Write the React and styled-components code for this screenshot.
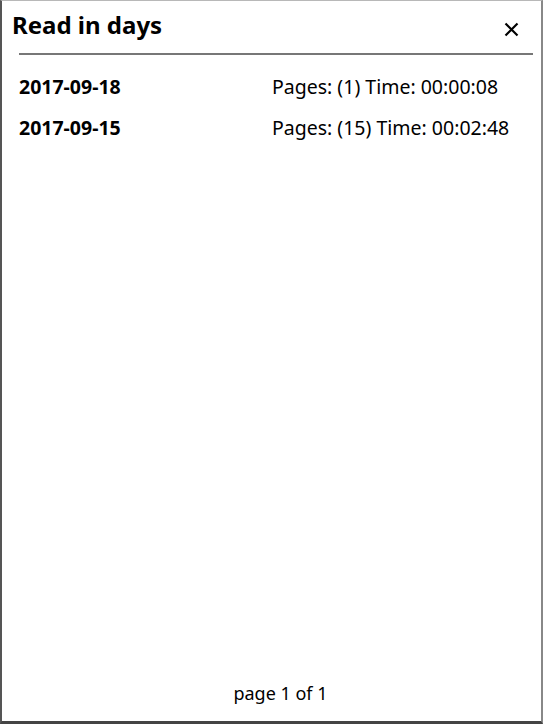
import React from "react";
import styled, { createGlobalStyle } from "styled-components";

const Global = createGlobalStyle`
  html, body {
    margin: 0;
    padding: 0;
    background: #fff;
  }
  body {
    font-family: "Noto Sans", "DejaVu Sans", sans-serif;
    color: #000;
  }
`;

const Frame = styled.div`
  box-sizing: border-box;
  width: 543px;
  height: 724px;
  display: flex;
  flex-direction: column;
  border-top: 1px solid #b8b8b8;
  border-left: 2px solid #555;
  border-right: 2px solid #888;
  border-bottom: 3px solid #444;
  background: #fff;
`;

const Header = styled.div`
  display: flex;
  align-items: center;
  justify-content: space-between;
  height: 50px;
  padding: 0 21px 0 10px;
`;

const Title = styled.h1`
  margin: 0;
  font-size: 24px;
  font-weight: 700;
  line-height: 1;
  margin-top: -2px;
`;

const Close = styled.button`
  border: 0;
  background: none;
  padding: 0;
  width: 18px;
  height: 20px;
  display: flex;
  align-items: center;
  justify-content: center;
  margin-top: 6px;
  cursor: pointer;
`;

const Rule = styled.hr`
  margin: 2px 8px 0 17px;
  border: 0;
  height: 2px;
  background: #777;
`;

const List = styled.div`
  display: flex;
  flex-direction: column;
  padding: 11px 0 0 17px;
`;

const Row = styled.div`
  display: grid;
  grid-template-columns: 253px 1fr;
  height: 41px;
  align-items: center;
  font-size: 19.5px;
`;

const Day = styled.span`
  font-weight: 700;
`;

const Stat = styled.span`
  font-weight: 400;
`;

const Footer = styled.div`
  margin-top: auto;
  padding: 0 0 16px 18px;
  text-align: center;
  font-size: 18px;
`;

const days = [
  { date: "2017-09-18", pages: 1, time: "00:00:08" },
  { date: "2017-09-15", pages: 15, time: "00:02:48" },
];

export default function App() {
  return (
    <>
      <Global />
      <Frame>
        <Header>
          <Title>Read in days</Title>
          <Close aria-label="close">
            <svg width="15" height="15" viewBox="0 0 15 15">
              <path d="M1.5 1.5 L13.5 13.5 M13.5 1.5 L1.5 13.5" stroke="#000" strokeWidth="2.2" />
            </svg>
          </Close>
        </Header>
        <Rule />
        <List>
          {days.map((d) => (
            <Row key={d.date}>
              <Day>{d.date}</Day>
              <Stat>
                Pages: ({d.pages}) Time: {d.time}
              </Stat>
            </Row>
          ))}
        </List>
        <Footer>page 1 of 1</Footer>
      </Frame>
    </>
  );
}
